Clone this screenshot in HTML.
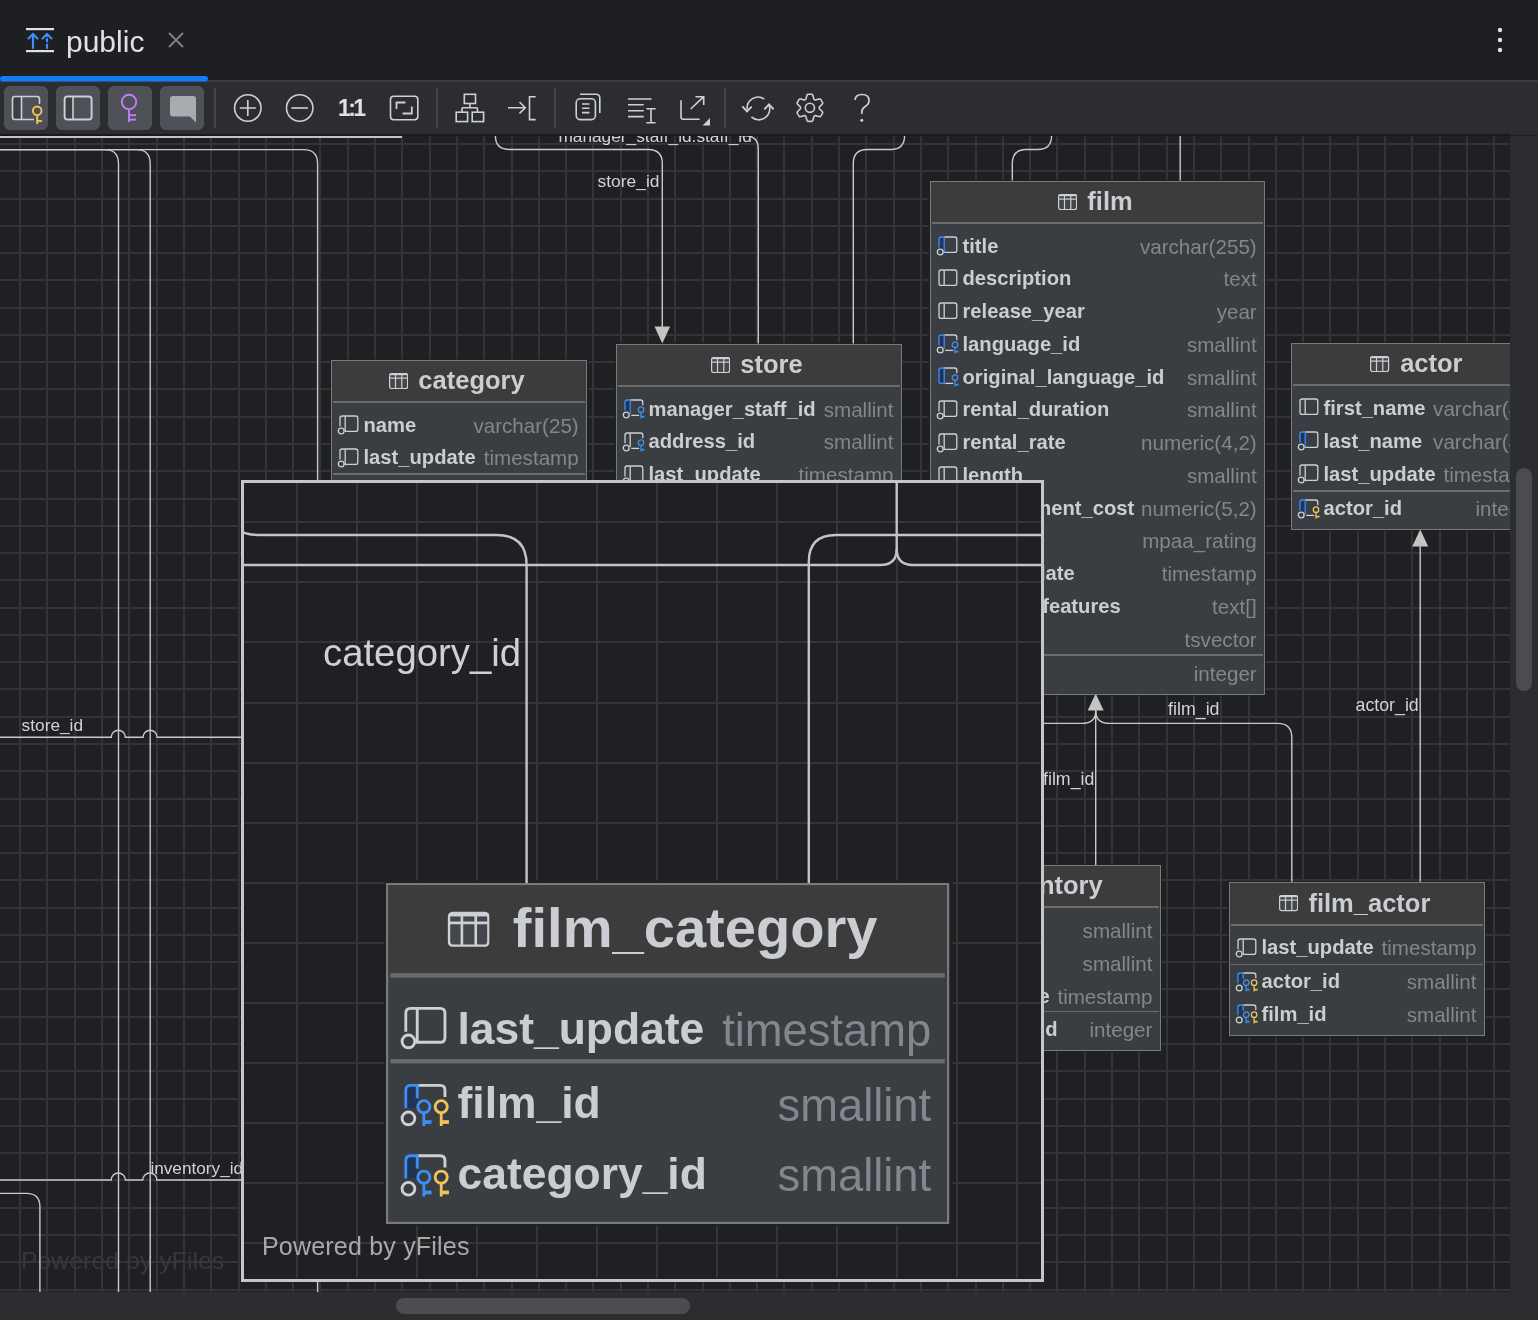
<!DOCTYPE html><html><head><meta charset="utf-8"><style>
*{margin:0;padding:0;box-sizing:border-box}
html,body{width:1538px;height:1320px;overflow:hidden;background:#1e1f22;font-family:"Liberation Sans",sans-serif;-webkit-font-smoothing:antialiased}
.abs,.tb{will-change:transform}
.abs{position:absolute}
.tb{position:absolute;background:#3a3d41;border:1.4px solid #7a7a7a;overflow:hidden}
.hd{position:absolute;left:0;top:0;right:0;background:#3c3c3c}
.tt{position:absolute;text-align:center;font-weight:bold;color:#cacdd2;white-space:nowrap}
.sp{position:absolute;left:1px;right:1px;height:1.4px;background:#6b6b6b}
.ci{position:absolute;overflow:visible}
.nm{position:absolute;font-weight:bold;font-size:20.2px;line-height:25px;color:#cacdd2;white-space:nowrap}
.ty{position:absolute;font-size:20.6px;line-height:25px;color:#83878d;white-space:nowrap}
.lbl{position:absolute;font-size:17px;line-height:20px;color:#d2d3d6;white-space:nowrap}
</style></head><body>

<div class="abs" style="left:0;top:0;width:1538px;height:81px;background:#1e1f22"></div>
<svg class="abs" style="left:0;top:0" width="220" height="82"><rect x="26" y="28" width="28" height="2.2" fill="#dfe1e5"/><rect x="26" y="50" width="28" height="2.2" fill="#dfe1e5"/><g stroke="#3e8ef7" stroke-width="2.2" fill="none" stroke-linecap="round"><path d="M33,48 V34 M28.5,38.5 L33,34 L37.5,38.5"/><path d="M47,34 V36 M47,39 V41.5 M47,44.5 V48 M42.5,38.5 L47,34 L51.5,38.5"/></g><g stroke="#7f8185" stroke-width="1.8"><path d="M169,33 L183,47 M183,33 L169,47"/></g></svg>
<div class="abs" style="left:66px;top:27px;font-size:30px;line-height:30px;color:#dfe1e5">public</div>
<svg class="abs" style="left:1490px;top:24px" width="20" height="36"><g fill="#dfe1e5"><circle cx="10" cy="6" r="2.2"/><circle cx="10" cy="16" r="2.2"/><circle cx="10" cy="26" r="2.2"/></g></svg>
<div class="abs" style="left:0;top:80px;width:1538px;height:1.5px;background:#393b40"></div>
<div class="abs" style="left:0;top:81.5px;width:1538px;height:52.5px;background:#2b2d30"></div>
<div class="abs" style="left:0;top:134px;width:1510px;height:2px;background:#18191b"></div>
<svg class="abs" style="left:0;top:70px" width="220" height="16"><rect x="0" y="6" width="208" height="5.5" rx="2.75" fill="#0f7cf5"/></svg>
<svg class="abs" style="left:0;top:0" width="900" height="134"><rect x="4" y="86" width="44" height="44" rx="6" fill="#4e5157"/><rect x="56" y="86" width="44" height="44" rx="6" fill="#4e5157"/><rect x="108" y="86" width="44" height="44" rx="6" fill="#4e5157"/><rect x="160" y="86" width="44" height="44" rx="6" fill="#4e5157"/><path d="M12.5,96.5 H21.5 V119.5 H12.5 Z" fill="#3c3f44"/><path d="M34,119.5 H15 Q12.5,119.5 12.5,117 V99 Q12.5,96.5 15,96.5 H37 Q39.5,96.5 39.5,99 V104" fill="none" stroke="#ced0d6" stroke-width="1.6"/><line x1="21.5" y1="96.5" x2="21.5" y2="119.5" stroke="#ced0d6" stroke-width="1.6"/><circle cx="37.2" cy="110.8" r="4.3" fill="#4e5157" stroke="#f2c356" stroke-width="1.9"/><line x1="37.2" y1="115" x2="37.2" y2="124" stroke="#f2c356" stroke-width="1.9"/><line x1="37.2" y1="121" x2="42" y2="121" stroke="#f2c356" stroke-width="1.9"/><path d="M64.5,96.5 H73 V119.5 H64.5 Z" fill="#3c3f44"/><rect x="64.6" y="96.5" width="27" height="23" rx="2.8" fill="none" stroke="#ced0d6" stroke-width="1.9"/><line x1="73" y1="96.5" x2="73" y2="119.5" stroke="#ced0d6" stroke-width="1.6"/><circle cx="129" cy="102" r="7.2" fill="none" stroke="#c27ef2" stroke-width="1.9"/><line x1="129" y1="109" x2="129" y2="122" stroke="#c27ef2" stroke-width="1.9"/><line x1="129" y1="115.2" x2="136" y2="115.2" stroke="#c27ef2" stroke-width="1.9"/><line x1="129" y1="119.6" x2="136" y2="119.6" stroke="#c27ef2" stroke-width="1.9"/><path d="M173,96 H193 Q196,96 196,99 V122.5 L190,116.5 H173 Q170,116.5 170,113.5 V99 Q170,96 173,96 Z" fill="#a9acaf"/><rect x="214" y="88" width="2" height="40" fill="#43454a"/><rect x="436" y="88" width="2" height="40" fill="#43454a"/><rect x="554" y="88" width="2" height="40" fill="#43454a"/><rect x="724" y="88" width="2" height="40" fill="#43454a"/><g fill="none" stroke="#ced0d6" stroke-width="1.6"><circle cx="247.8" cy="108" r="13.2"/><path d="M239.8,108 H255.8 M247.8,100 V116"/><circle cx="299.7" cy="108" r="13.2"/><path d="M291.5,108 H308"/><rect x="390.5" y="96.3" width="27.3" height="23.5" rx="3.2"/><path d="M396.5,109 V102.5 H405.5 M411.8,106.5 V113.5 H402.5" stroke-width="1.8"/><rect x="464.3" y="94.3" width="11.2" height="9.2"/><path d="M469.9,103.5 V107.8 M462,107.8 H477.4 M462,107.8 V112 M477.4,107.8 V112"/><rect x="456.2" y="112.2" width="11.4" height="9.4"/><rect x="472.2" y="112.2" width="11.4" height="9.4"/><path d="M508,107.7 H525 M519.5,102 L525.3,107.7 L519.5,113.4"/><path d="M535.7,96.8 H529.5 V119.6 H535.7"/><rect x="576.2" y="98.8" width="19.2" height="20.8" rx="4"/><path d="M580,94.3 H596 Q599.8,94.3 599.8,98 V113"/><path d="M582,104 H589.5 M582,108.3 H589.5 M582,112.6 H589.5"/><path d="M628,99 H651.6 M628,104.7 H643.7 M628,110.7 H643.7 M628,116.6 H643.7"/><path d="M651,108.8 V122.8 M646.4,108.8 H655.6 M646.4,122.8 H655.6"/><path d="M681,100.2 V117 Q681,119.2 683.2,119.2 H699.6"/><path d="M690.7,109 L703.7,96.7 M695.5,96.7 H703.7 V104.9"/><path d="M764.3,99.1 A10.9,10.9 0 0 0 747.2,109.3"/><path d="M751.4,116.9 A10.9,10.9 0 0 0 769,105"/><path d="M742.3,106.4 L747,111.4 L751.7,106.7" stroke-width="1.9"/><path d="M764.3,109.3 L769,104.3 L773.6,109.3" stroke-width="1.9"/><circle cx="809.9" cy="107.8" r="4.6"/></g><path d="M819.30,107.80 L819.30,108.05 L819.29,108.29 L819.30,108.54 L819.53,108.81 L819.82,109.11 L820.16,109.42 L820.52,109.77 L820.92,110.14 L821.32,110.54 L821.72,110.97 L822.10,111.41 L822.46,111.88 L822.72,112.34 L822.60,112.67 L822.46,113.00 L822.32,113.33 L822.18,113.65 L822.02,113.97 L821.85,114.29 L821.68,114.60 L821.50,114.91 L821.31,115.21 L821.11,115.50 L820.90,115.79 L820.69,116.08 L820.47,116.36 L820.24,116.63 L819.72,116.64 L819.13,116.56 L818.55,116.45 L817.98,116.32 L817.44,116.17 L816.92,116.02 L816.43,115.87 L815.99,115.74 L815.59,115.64 L815.24,115.57 L815.02,115.68 L814.81,115.81 L814.60,115.94 L814.39,116.06 L814.17,116.18 L813.96,116.31 L813.84,116.65 L813.73,117.05 L813.62,117.49 L813.51,117.99 L813.38,118.51 L813.23,119.06 L813.07,119.62 L812.87,120.18 L812.65,120.72 L812.38,121.17 L812.03,121.23 L811.68,121.28 L811.32,121.33 L810.97,121.36 L810.61,121.38 L810.26,121.40 L809.90,121.40 L809.54,121.40 L809.19,121.38 L808.83,121.36 L808.48,121.33 L808.12,121.28 L807.77,121.23 L807.42,121.17 L807.15,120.72 L806.93,120.18 L806.73,119.62 L806.57,119.06 L806.42,118.51 L806.29,117.99 L806.18,117.49 L806.07,117.05 L805.96,116.65 L805.84,116.31 L805.63,116.18 L805.41,116.06 L805.20,115.94 L804.99,115.81 L804.78,115.68 L804.56,115.57 L804.21,115.64 L803.81,115.74 L803.37,115.87 L802.88,116.02 L802.36,116.17 L801.82,116.32 L801.25,116.45 L800.67,116.56 L800.08,116.64 L799.56,116.63 L799.33,116.36 L799.11,116.08 L798.90,115.79 L798.69,115.50 L798.49,115.21 L798.30,114.91 L798.12,114.60 L797.95,114.29 L797.78,113.97 L797.62,113.65 L797.48,113.33 L797.34,113.00 L797.20,112.67 L797.08,112.34 L797.34,111.88 L797.70,111.41 L798.08,110.97 L798.48,110.54 L798.88,110.14 L799.28,109.77 L799.64,109.42 L799.98,109.11 L800.27,108.81 L800.50,108.54 L800.51,108.29 L800.50,108.05 L800.50,107.80 L800.50,107.55 L800.51,107.31 L800.50,107.06 L800.27,106.79 L799.98,106.49 L799.64,106.18 L799.28,105.83 L798.88,105.46 L798.48,105.06 L798.08,104.63 L797.70,104.19 L797.34,103.72 L797.08,103.26 L797.20,102.93 L797.34,102.60 L797.48,102.27 L797.62,101.95 L797.78,101.63 L797.95,101.31 L798.12,101.00 L798.30,100.69 L798.49,100.39 L798.69,100.10 L798.90,99.81 L799.11,99.52 L799.33,99.24 L799.56,98.97 L800.08,98.96 L800.67,99.04 L801.25,99.15 L801.82,99.28 L802.36,99.43 L802.88,99.58 L803.37,99.73 L803.81,99.86 L804.21,99.96 L804.56,100.03 L804.78,99.92 L804.99,99.79 L805.20,99.66 L805.41,99.54 L805.63,99.42 L805.84,99.29 L805.96,98.95 L806.07,98.55 L806.18,98.11 L806.29,97.61 L806.42,97.09 L806.57,96.54 L806.73,95.98 L806.93,95.42 L807.15,94.88 L807.42,94.43 L807.77,94.37 L808.12,94.32 L808.48,94.27 L808.83,94.24 L809.19,94.22 L809.54,94.20 L809.90,94.20 L810.26,94.20 L810.61,94.22 L810.97,94.24 L811.32,94.27 L811.68,94.32 L812.03,94.37 L812.38,94.43 L812.65,94.88 L812.87,95.42 L813.07,95.98 L813.23,96.54 L813.38,97.09 L813.51,97.61 L813.62,98.11 L813.73,98.55 L813.84,98.95 L813.96,99.29 L814.17,99.42 L814.39,99.54 L814.60,99.66 L814.81,99.79 L815.02,99.92 L815.24,100.03 L815.59,99.96 L815.99,99.86 L816.43,99.73 L816.92,99.58 L817.44,99.43 L817.98,99.28 L818.55,99.15 L819.13,99.04 L819.72,98.96 L820.24,98.97 L820.47,99.24 L820.69,99.52 L820.90,99.81 L821.11,100.10 L821.31,100.39 L821.50,100.69 L821.68,101.00 L821.85,101.31 L822.02,101.63 L822.18,101.95 L822.32,102.27 L822.46,102.60 L822.60,102.93 L822.72,103.26 L822.46,103.72 L822.10,104.19 L821.72,104.63 L821.32,105.06 L820.92,105.46 L820.52,105.83 L820.16,106.18 L819.82,106.49 L819.53,106.79 L819.30,107.06 L819.29,107.31 L819.30,107.55 Z" fill="none" stroke="#ced0d6" stroke-width="1.6" stroke-linejoin="round"/><path d="M702.6,125.6 L710,118 L710,125.6 Z" fill="#ced0d6"/><path d="M855,100 Q855.5,94.5 862,94.5 Q869,94.5 869,100.5 Q869,104.5 864.5,107 Q861.8,108.8 861.8,112.5 V114" fill="none" stroke="#ced0d6" stroke-width="1.7"/><circle cx="861.8" cy="120.2" r="1.5" fill="#ced0d6"/></svg>
<div class="abs" style="left:337.5px;top:96.83px;font-size:23px;line-height:23px;font-weight:bold;color:#dfe1e5;letter-spacing:-2.6px">1:1</div>
<div class="abs" style="left:0;top:136px;width:1510px;height:1156px;overflow:hidden;background:#1f2023">
<svg class="abs" style="left:0;top:-136px" width="1510" height="1292">
<g fill="#343435"><rect x="19" y="136" width="2" height="1156"/><rect x="46" y="136" width="2" height="1156"/><rect x="74" y="136" width="2" height="1156"/><rect x="101" y="136" width="2" height="1156"/><rect x="128" y="136" width="2" height="1156"/><rect x="156" y="136" width="2" height="1156"/><rect x="183" y="136" width="2" height="1156"/><rect x="210" y="136" width="2" height="1156"/><rect x="238" y="136" width="2" height="1156"/><rect x="265" y="136" width="2" height="1156"/><rect x="292" y="136" width="2" height="1156"/><rect x="319" y="136" width="2" height="1156"/><rect x="347" y="136" width="2" height="1156"/><rect x="374" y="136" width="2" height="1156"/><rect x="401" y="136" width="2" height="1156"/><rect x="429" y="136" width="2" height="1156"/><rect x="456" y="136" width="2" height="1156"/><rect x="483" y="136" width="2" height="1156"/><rect x="511" y="136" width="2" height="1156"/><rect x="538" y="136" width="2" height="1156"/><rect x="565" y="136" width="2" height="1156"/><rect x="592" y="136" width="2" height="1156"/><rect x="620" y="136" width="2" height="1156"/><rect x="647" y="136" width="2" height="1156"/><rect x="674" y="136" width="2" height="1156"/><rect x="702" y="136" width="2" height="1156"/><rect x="729" y="136" width="2" height="1156"/><rect x="756" y="136" width="2" height="1156"/><rect x="783" y="136" width="2" height="1156"/><rect x="811" y="136" width="2" height="1156"/><rect x="838" y="136" width="2" height="1156"/><rect x="865" y="136" width="2" height="1156"/><rect x="893" y="136" width="2" height="1156"/><rect x="920" y="136" width="2" height="1156"/><rect x="947" y="136" width="2" height="1156"/><rect x="975" y="136" width="2" height="1156"/><rect x="1002" y="136" width="2" height="1156"/><rect x="1029" y="136" width="2" height="1156"/><rect x="1056" y="136" width="2" height="1156"/><rect x="1084" y="136" width="2" height="1156"/><rect x="1111" y="136" width="2" height="1156"/><rect x="1138" y="136" width="2" height="1156"/><rect x="1166" y="136" width="2" height="1156"/><rect x="1193" y="136" width="2" height="1156"/><rect x="1220" y="136" width="2" height="1156"/><rect x="1248" y="136" width="2" height="1156"/><rect x="1275" y="136" width="2" height="1156"/><rect x="1302" y="136" width="2" height="1156"/><rect x="1329" y="136" width="2" height="1156"/><rect x="1357" y="136" width="2" height="1156"/><rect x="1384" y="136" width="2" height="1156"/><rect x="1411" y="136" width="2" height="1156"/><rect x="1439" y="136" width="2" height="1156"/><rect x="1466" y="136" width="2" height="1156"/><rect x="1493" y="136" width="2" height="1156"/><rect x="0" y="143" width="1510" height="2"/><rect x="0" y="170" width="1510" height="2"/><rect x="0" y="198" width="1510" height="2"/><rect x="0" y="225" width="1510" height="2"/><rect x="0" y="252" width="1510" height="2"/><rect x="0" y="279" width="1510" height="2"/><rect x="0" y="307" width="1510" height="2"/><rect x="0" y="334" width="1510" height="2"/><rect x="0" y="361" width="1510" height="2"/><rect x="0" y="388" width="1510" height="2"/><rect x="0" y="416" width="1510" height="2"/><rect x="0" y="443" width="1510" height="2"/><rect x="0" y="470" width="1510" height="2"/><rect x="0" y="498" width="1510" height="2"/><rect x="0" y="525" width="1510" height="2"/><rect x="0" y="552" width="1510" height="2"/><rect x="0" y="579" width="1510" height="2"/><rect x="0" y="607" width="1510" height="2"/><rect x="0" y="634" width="1510" height="2"/><rect x="0" y="661" width="1510" height="2"/><rect x="0" y="688" width="1510" height="2"/><rect x="0" y="716" width="1510" height="2"/><rect x="0" y="743" width="1510" height="2"/><rect x="0" y="770" width="1510" height="2"/><rect x="0" y="798" width="1510" height="2"/><rect x="0" y="825" width="1510" height="2"/><rect x="0" y="852" width="1510" height="2"/><rect x="0" y="879" width="1510" height="2"/><rect x="0" y="907" width="1510" height="2"/><rect x="0" y="934" width="1510" height="2"/><rect x="0" y="961" width="1510" height="2"/><rect x="0" y="988" width="1510" height="2"/><rect x="0" y="1016" width="1510" height="2"/><rect x="0" y="1043" width="1510" height="2"/><rect x="0" y="1070" width="1510" height="2"/><rect x="0" y="1098" width="1510" height="2"/><rect x="0" y="1125" width="1510" height="2"/><rect x="0" y="1152" width="1510" height="2"/><rect x="0" y="1179" width="1510" height="2"/><rect x="0" y="1207" width="1510" height="2"/><rect x="0" y="1234" width="1510" height="2"/><rect x="0" y="1261" width="1510" height="2"/><rect x="0" y="1289" width="1510" height="2"/></g>
<text x="21" y="1268.5" font-family="Liberation Sans" font-size="24.5" fill="#37383b" letter-spacing="0.2">Powered by yFiles</text>
<g fill="#1f2023"><rect x="330.4" y="359.2" width="258.1" height="154.75"/><rect x="614.7" y="342.6" width="287.9" height="187.5"/><rect x="928.6" y="179.6" width="337.1" height="515.62"/><rect x="1290.4" y="342.2" width="257.8" height="188.6"/><rect x="903.9" y="864" width="257.8" height="187.6"/><rect x="1227.8" y="880.8" width="257.9" height="156.1"/></g>
<rect x="0" y="136" width="402" height="2" fill="#c4c4c4"/>
<g fill="none" stroke="#c9c9c9" stroke-width="1.4"><path d="M0,149.6 H104.5 Q118.5,149.6 118.5,163.6 V1292"/><path d="M0,149.6 H136.2 Q150.2,149.6 150.2,163.6 V1292"/><path d="M0,149.6 H303.6 Q317.6,149.6 317.6,163.6 V1292"/><path d="M0,737.2 H111.3 A7,7 0 0 1 125.3,737.2 H143.1 A7,7 0 0 1 157.1,737.2 H260"/><path d="M0,1180 H111.3 A7,7 0 0 1 125.3,1180 H142.8 A7,7 0 0 1 156.8,1180 H260"/><path d="M0,1193.4 H26.5 Q39.9,1193.4 39.9,1206.8 V1292"/><path d="M495.4,130 V136 Q495.4,149.5 509.7,149.5 H648.2 Q662.3,149.5 662.3,163.6 V328"/><path d="M740,135.8 H745 Q758.3,135.8 758.3,149 V343.5"/><path d="M853.3,343.5 V163.6 Q853.3,149.5 867.3,149.5 H890.6 Q904.6,149.5 904.6,135.5 V130"/><path d="M1012.3,180.5 V163.6 Q1012.3,149.5 1026.3,149.5 H1037.6 Q1051.6,149.5 1051.6,135.5 V130"/><path d="M1180.2,130 V180.5"/><path d="M1420.2,545 V881.7"/><path d="M1095.7,708 V865"/><path d="M1030,723.4 H1082 Q1095.7,723.4 1095.7,711"/><path d="M1095.7,711 Q1095.7,723.4 1109.4,723.4 H1277.6 Q1291.8,723.4 1291.8,737.6 V881.7"/></g>
<g fill="#c4c4c4"><path d="M662.3,343.5 L654.5,326.5 L670.1,326.5 Z"/><path d="M1420.2,529.5 L1412.2,546.5 L1428.2,546.5 Z"/><path d="M1095.7,693.5 L1087.7,710.5 L1103.7,710.5 Z"/></g>
</svg>
</div>
<div class="abs" style="left:0;top:136px;width:1510px;height:1156px;overflow:hidden">
<div class="lbl" style="left:558.4px;top:-8.14px;font-size:17.3px;line-height:17.3px;color:#d2d3d6;">manager_staff_id:staff_id</div>
<div class="lbl" style="left:597.6px;top:37.07px;font-size:17.4px;line-height:17.4px;color:#d2d3d6;">store_id</div>
<div class="lbl" style="left:21.6px;top:581.36px;font-size:17.3px;line-height:17.3px;color:#d2d3d6;">store_id</div>
<div class="lbl" style="left:150.4px;top:1023.94px;font-size:17.2px;line-height:17.2px;color:#d2d3d6;">inventory_id</div>
<div class="lbl" style="left:1168.1px;top:565.23px;font-size:17.8px;line-height:17.8px;color:#d2d3d6;">film_id</div>
<div class="lbl" style="left:1043px;top:634.93px;font-size:17.8px;line-height:17.8px;color:#d2d3d6;">film_id</div>
<div class="lbl" style="left:1355.5px;top:561.43px;font-size:17.8px;line-height:17.8px;color:#d2d3d6;">actor_id</div>
<div class="tb" style="left:331.3px;top:224.1px;width:256.3px;height:152.95px">
<div class="hd" style="height:41px"></div>
<div class="tt" style="top:7.15px;left:0;width:256.3px;font-size:25.5px;line-height:25.5px"><svg width="19.2" height="16.2" viewBox="0 0 19.2 16.2" style="vertical-align:0px;margin-right:10.5px;margin-left:-7px"><rect x="0.6" y="0.6" width="18" height="15" rx="2" fill="#43464b" stroke="#ced0d6" stroke-width="1.2"/><rect x="0.6" y="0.6" width="18" height="1.6" fill="#ced0d6"/><line x1="0.6" y1="5.1" x2="18.6" y2="5.1" stroke="#ced0d6" stroke-width="1.2"/><line x1="6.5" y1="0.6" x2="6.5" y2="15.6" stroke="#ced0d6" stroke-width="1.2"/><line x1="12.8" y1="0.6" x2="12.8" y2="15.6" stroke="#ced0d6" stroke-width="1.2"/></svg>category</div>
<div class="sp" style="top:40.3px"></div>
<div class="sp" style="top:112.45px"></div>
<svg class="ci" style="left:5.8px;top:52.2px" width="24" height="24" viewBox="-2 -3 24 24"><rect x="0" y="0" width="5.2" height="15.4" fill="#3d4045"/><path d="M5.2,0 H15.600000000000001 Q17.8,0 17.8,2.2 V13.2 Q17.8,15.4 15.600000000000001,15.4 H4.6" fill="none" stroke="#ced0d6" stroke-width="1.3"/><path d="M5.2,0 H2.2 Q0,0 0,2.2 V10.600000000000001 M5.2,0 V15.4" fill="none" stroke="#ced0d6" stroke-width="1.3"/><circle cx="1.2" cy="15" r="2.9" fill="#3a3d41" stroke="#ced0d6" stroke-width="1.3"/></svg>
<div class="nm" style="left:31.5px;top:51.5px">name</div>
<div class="ty" style="right:7.6px;top:51.5px">varchar(25)</div>
<svg class="ci" style="left:5.8px;top:84.95px" width="24" height="24" viewBox="-2 -3 24 24"><rect x="0" y="0" width="5.2" height="15.4" fill="#3d4045"/><path d="M5.2,0 H15.600000000000001 Q17.8,0 17.8,2.2 V13.2 Q17.8,15.4 15.600000000000001,15.4 H4.6" fill="none" stroke="#ced0d6" stroke-width="1.3"/><path d="M5.2,0 H2.2 Q0,0 0,2.2 V10.600000000000001 M5.2,0 V15.4" fill="none" stroke="#ced0d6" stroke-width="1.3"/><circle cx="1.2" cy="15" r="2.9" fill="#3a3d41" stroke="#ced0d6" stroke-width="1.3"/></svg>
<div class="nm" style="left:31.5px;top:84.25px">last_update</div>
<div class="ty" style="right:7.6px;top:84.25px">timestamp</div>
<svg class="ci" style="left:5.8px;top:118.95px" width="24" height="24" viewBox="-2 -3 24 24"><path d="M5.2,0 H15.600000000000001 Q17.8,0 17.8,2.2 V5.3" fill="none" stroke="#ced0d6" stroke-width="1.3"/><rect x="0" y="0" width="5.2" height="13.8" fill="#213456"/><path d="M5.2,13.9 V0 H2.2 Q0,0 0,2.2 V10.2" fill="none" stroke="#3d8ef5" stroke-width="1.3"/><path d="M6.2,15.4 H14.2" fill="none" stroke="#ced0d6" stroke-width="1.3"/><circle cx="16.0" cy="9.7" r="2.75" fill="#3a3d41" stroke="#f2c356" stroke-width="1.3"/><line x1="16.0" y1="12.45" x2="16.0" y2="18.5" stroke="#f2c356" stroke-width="1.3"/><rect x="16.0" y="15.8" width="3.5" height="1.7" fill="#f2c356"/><circle cx="1.2" cy="15" r="2.9" fill="#3a3d41" stroke="#ced0d6" stroke-width="1.3"/></svg>
<div class="nm" style="left:31.5px;top:118.25px">category_id</div>
<div class="ty" style="right:7.6px;top:118.25px">integer</div>
</div>
<div class="tb" style="left:615.6px;top:207.5px;width:286.1px;height:185.7px">
<div class="hd" style="height:41px"></div>
<div class="tt" style="top:7.15px;left:0;width:286.1px;font-size:25.5px;line-height:25.5px"><svg width="19.2" height="16.2" viewBox="0 0 19.2 16.2" style="vertical-align:0px;margin-right:10.5px;margin-left:-7px"><rect x="0.6" y="0.6" width="18" height="15" rx="2" fill="#43464b" stroke="#ced0d6" stroke-width="1.2"/><rect x="0.6" y="0.6" width="18" height="1.6" fill="#ced0d6"/><line x1="0.6" y1="5.1" x2="18.6" y2="5.1" stroke="#ced0d6" stroke-width="1.2"/><line x1="6.5" y1="0.6" x2="6.5" y2="15.6" stroke="#ced0d6" stroke-width="1.2"/><line x1="12.8" y1="0.6" x2="12.8" y2="15.6" stroke="#ced0d6" stroke-width="1.2"/></svg>store</div>
<div class="sp" style="top:40.3px"></div>
<div class="sp" style="top:145.2px"></div>
<svg class="ci" style="left:5.8px;top:52.2px" width="24" height="24" viewBox="-2 -3 24 24"><path d="M5.2,0 H15.600000000000001 Q17.8,0 17.8,2.2 V5.3" fill="none" stroke="#ced0d6" stroke-width="1.3"/><rect x="0" y="0" width="5.2" height="13.8" fill="#213456"/><path d="M5.2,13.9 V0 H2.2 Q0,0 0,2.2 V10.2" fill="none" stroke="#3d8ef5" stroke-width="1.3"/><path d="M6.2,15.4 H14.2" fill="none" stroke="#ced0d6" stroke-width="1.3"/><circle cx="16.0" cy="9.7" r="2.75" fill="#3a3d41" stroke="#3d8ef5" stroke-width="1.3"/><line x1="16.0" y1="12.45" x2="16.0" y2="18.5" stroke="#3d8ef5" stroke-width="1.3"/><rect x="16.0" y="15.8" width="3.5" height="1.7" fill="#3d8ef5"/><circle cx="1.2" cy="15" r="2.9" fill="#3a3d41" stroke="#ced0d6" stroke-width="1.3"/></svg>
<div class="nm" style="left:31.5px;top:51.5px">manager_staff_id</div>
<div class="ty" style="right:7.6px;top:51.5px">smallint</div>
<svg class="ci" style="left:5.8px;top:84.95px" width="24" height="24" viewBox="-2 -3 24 24"><path d="M5.2,0 H15.600000000000001 Q17.8,0 17.8,2.2 V5.3" fill="none" stroke="#ced0d6" stroke-width="1.3"/><rect x="0" y="0" width="5.2" height="13.8" fill="#3d4045"/><path d="M5.2,13.9 V0 H2.2 Q0,0 0,2.2 V10.2" fill="none" stroke="#ced0d6" stroke-width="1.3"/><path d="M6.2,15.4 H14.2" fill="none" stroke="#ced0d6" stroke-width="1.3"/><circle cx="16.0" cy="9.7" r="2.75" fill="#3a3d41" stroke="#3d8ef5" stroke-width="1.3"/><line x1="16.0" y1="12.45" x2="16.0" y2="18.5" stroke="#3d8ef5" stroke-width="1.3"/><rect x="16.0" y="15.8" width="3.5" height="1.7" fill="#3d8ef5"/><circle cx="1.2" cy="15" r="2.9" fill="#3a3d41" stroke="#ced0d6" stroke-width="1.3"/></svg>
<div class="nm" style="left:31.5px;top:84.25px">address_id</div>
<div class="ty" style="right:7.6px;top:84.25px">smallint</div>
<svg class="ci" style="left:5.8px;top:117.7px" width="24" height="24" viewBox="-2 -3 24 24"><rect x="0" y="0" width="5.2" height="15.4" fill="#3d4045"/><path d="M5.2,0 H15.600000000000001 Q17.8,0 17.8,2.2 V13.2 Q17.8,15.4 15.600000000000001,15.4 H4.6" fill="none" stroke="#ced0d6" stroke-width="1.3"/><path d="M5.2,0 H2.2 Q0,0 0,2.2 V10.600000000000001 M5.2,0 V15.4" fill="none" stroke="#ced0d6" stroke-width="1.3"/><circle cx="1.2" cy="15" r="2.9" fill="#3a3d41" stroke="#ced0d6" stroke-width="1.3"/></svg>
<div class="nm" style="left:31.5px;top:117px">last_update</div>
<div class="ty" style="right:7.6px;top:117px">timestamp</div>
<svg class="ci" style="left:5.8px;top:151.7px" width="24" height="24" viewBox="-2 -3 24 24"><path d="M5.2,0 H15.600000000000001 Q17.8,0 17.8,2.2 V5.3" fill="none" stroke="#ced0d6" stroke-width="1.3"/><rect x="0" y="0" width="5.2" height="13.8" fill="#213456"/><path d="M5.2,13.9 V0 H2.2 Q0,0 0,2.2 V10.2" fill="none" stroke="#3d8ef5" stroke-width="1.3"/><path d="M6.2,15.4 H14.2" fill="none" stroke="#ced0d6" stroke-width="1.3"/><circle cx="16.0" cy="9.7" r="2.75" fill="#3a3d41" stroke="#f2c356" stroke-width="1.3"/><line x1="16.0" y1="12.45" x2="16.0" y2="18.5" stroke="#f2c356" stroke-width="1.3"/><rect x="16.0" y="15.8" width="3.5" height="1.7" fill="#f2c356"/><circle cx="1.2" cy="15" r="2.9" fill="#3a3d41" stroke="#ced0d6" stroke-width="1.3"/></svg>
<div class="nm" style="left:31.5px;top:151px">store_id</div>
<div class="ty" style="right:7.6px;top:151px">integer</div>
</div>
<div class="tb" style="left:929.5px;top:44.5px;width:335.3px;height:513.82px">
<div class="hd" style="height:41px"></div>
<div class="tt" style="top:7.15px;left:0;width:335.3px;font-size:25.5px;line-height:25.5px"><svg width="19.2" height="16.2" viewBox="0 0 19.2 16.2" style="vertical-align:0px;margin-right:10.5px;margin-left:-7px"><rect x="0.6" y="0.6" width="18" height="15" rx="2" fill="#43464b" stroke="#ced0d6" stroke-width="1.2"/><rect x="0.6" y="0.6" width="18" height="1.6" fill="#ced0d6"/><line x1="0.6" y1="5.1" x2="18.6" y2="5.1" stroke="#ced0d6" stroke-width="1.2"/><line x1="6.5" y1="0.6" x2="6.5" y2="15.6" stroke="#ced0d6" stroke-width="1.2"/><line x1="12.8" y1="0.6" x2="12.8" y2="15.6" stroke="#ced0d6" stroke-width="1.2"/></svg>film</div>
<div class="sp" style="top:40.3px"></div>
<div class="sp" style="top:472.12px"></div>
<svg class="ci" style="left:5.8px;top:52.2px" width="24" height="24" viewBox="-2 -3 24 24"><rect x="0" y="0" width="5.2" height="15.4" fill="#213456"/><path d="M5.2,0 H15.600000000000001 Q17.8,0 17.8,2.2 V13.2 Q17.8,15.4 15.600000000000001,15.4 H4.6" fill="none" stroke="#ced0d6" stroke-width="1.3"/><path d="M5.2,0 H2.2 Q0,0 0,2.2 V10.600000000000001 M5.2,0 V15.4" fill="none" stroke="#3d8ef5" stroke-width="1.3"/><circle cx="1.2" cy="15" r="2.9" fill="#3a3d41" stroke="#ced0d6" stroke-width="1.3"/></svg>
<div class="nm" style="left:31.5px;top:51.5px">title</div>
<div class="ty" style="right:7.6px;top:51.5px">varchar(255)</div>
<svg class="ci" style="left:5.8px;top:84.96px" width="24" height="24" viewBox="-2 -3 24 24"><rect x="0" y="0" width="5.2" height="15.4" fill="#3d4045"/><path d="M5.2,0 H15.600000000000001 Q17.8,0 17.8,2.2 V13.2 Q17.8,15.4 15.600000000000001,15.4 H5.2" fill="none" stroke="#ced0d6" stroke-width="1.3"/><path d="M5.2,0 H2.2 Q0,0 0,2.2 V13.2 Q0,15.4 2.2,15.4 H5.2 M5.2,0 V15.4" fill="none" stroke="#ced0d6" stroke-width="1.3"/></svg>
<div class="nm" style="left:31.5px;top:84.26px">description</div>
<div class="ty" style="right:7.6px;top:84.26px">text</div>
<svg class="ci" style="left:5.8px;top:117.72px" width="24" height="24" viewBox="-2 -3 24 24"><rect x="0" y="0" width="5.2" height="15.4" fill="#3d4045"/><path d="M5.2,0 H15.600000000000001 Q17.8,0 17.8,2.2 V13.2 Q17.8,15.4 15.600000000000001,15.4 H5.2" fill="none" stroke="#ced0d6" stroke-width="1.3"/><path d="M5.2,0 H2.2 Q0,0 0,2.2 V13.2 Q0,15.4 2.2,15.4 H5.2 M5.2,0 V15.4" fill="none" stroke="#ced0d6" stroke-width="1.3"/></svg>
<div class="nm" style="left:31.5px;top:117.02px">release_year</div>
<div class="ty" style="right:7.6px;top:117.02px">year</div>
<svg class="ci" style="left:5.8px;top:150.48px" width="24" height="24" viewBox="-2 -3 24 24"><path d="M5.2,0 H15.600000000000001 Q17.8,0 17.8,2.2 V5.3" fill="none" stroke="#ced0d6" stroke-width="1.3"/><rect x="0" y="0" width="5.2" height="13.8" fill="#213456"/><path d="M5.2,13.9 V0 H2.2 Q0,0 0,2.2 V10.2" fill="none" stroke="#3d8ef5" stroke-width="1.3"/><path d="M6.2,15.4 H14.2" fill="none" stroke="#ced0d6" stroke-width="1.3"/><circle cx="16.0" cy="9.7" r="2.75" fill="#3a3d41" stroke="#3d8ef5" stroke-width="1.3"/><line x1="16.0" y1="12.45" x2="16.0" y2="18.5" stroke="#3d8ef5" stroke-width="1.3"/><rect x="16.0" y="15.8" width="3.5" height="1.7" fill="#3d8ef5"/><circle cx="1.2" cy="15" r="2.9" fill="#3a3d41" stroke="#ced0d6" stroke-width="1.3"/></svg>
<div class="nm" style="left:31.5px;top:149.78px">language_id</div>
<div class="ty" style="right:7.6px;top:149.78px">smallint</div>
<svg class="ci" style="left:5.8px;top:183.24px" width="24" height="24" viewBox="-2 -3 24 24"><path d="M5.2,0 H15.600000000000001 Q17.8,0 17.8,2.2 V5.3" fill="none" stroke="#ced0d6" stroke-width="1.3"/><rect x="0" y="0" width="5.2" height="15.4" fill="#213456"/><path d="M5.2,0 H2.2 Q0,0 0,2.2 V13.2 Q0,15.4 2.2,15.4 H5.2 V0" fill="none" stroke="#3d8ef5" stroke-width="1.3"/><path d="M6.2,15.4 H14.2" fill="none" stroke="#ced0d6" stroke-width="1.3"/><circle cx="16.0" cy="9.7" r="2.75" fill="#3a3d41" stroke="#3d8ef5" stroke-width="1.3"/><line x1="16.0" y1="12.45" x2="16.0" y2="18.5" stroke="#3d8ef5" stroke-width="1.3"/><rect x="16.0" y="15.8" width="3.5" height="1.7" fill="#3d8ef5"/></svg>
<div class="nm" style="left:31.5px;top:182.54px">original_language_id</div>
<div class="ty" style="right:7.6px;top:182.54px">smallint</div>
<svg class="ci" style="left:5.8px;top:216px" width="24" height="24" viewBox="-2 -3 24 24"><rect x="0" y="0" width="5.2" height="15.4" fill="#3d4045"/><path d="M5.2,0 H15.600000000000001 Q17.8,0 17.8,2.2 V13.2 Q17.8,15.4 15.600000000000001,15.4 H4.6" fill="none" stroke="#ced0d6" stroke-width="1.3"/><path d="M5.2,0 H2.2 Q0,0 0,2.2 V10.600000000000001 M5.2,0 V15.4" fill="none" stroke="#ced0d6" stroke-width="1.3"/><circle cx="1.2" cy="15" r="2.9" fill="#3a3d41" stroke="#ced0d6" stroke-width="1.3"/></svg>
<div class="nm" style="left:31.5px;top:215.3px">rental_duration</div>
<div class="ty" style="right:7.6px;top:215.3px">smallint</div>
<svg class="ci" style="left:5.8px;top:248.76px" width="24" height="24" viewBox="-2 -3 24 24"><rect x="0" y="0" width="5.2" height="15.4" fill="#3d4045"/><path d="M5.2,0 H15.600000000000001 Q17.8,0 17.8,2.2 V13.2 Q17.8,15.4 15.600000000000001,15.4 H4.6" fill="none" stroke="#ced0d6" stroke-width="1.3"/><path d="M5.2,0 H2.2 Q0,0 0,2.2 V10.600000000000001 M5.2,0 V15.4" fill="none" stroke="#ced0d6" stroke-width="1.3"/><circle cx="1.2" cy="15" r="2.9" fill="#3a3d41" stroke="#ced0d6" stroke-width="1.3"/></svg>
<div class="nm" style="left:31.5px;top:248.06px">rental_rate</div>
<div class="ty" style="right:7.6px;top:248.06px">numeric(4,2)</div>
<svg class="ci" style="left:5.8px;top:281.52px" width="24" height="24" viewBox="-2 -3 24 24"><rect x="0" y="0" width="5.2" height="15.4" fill="#3d4045"/><path d="M5.2,0 H15.600000000000001 Q17.8,0 17.8,2.2 V13.2 Q17.8,15.4 15.600000000000001,15.4 H5.2" fill="none" stroke="#ced0d6" stroke-width="1.3"/><path d="M5.2,0 H2.2 Q0,0 0,2.2 V13.2 Q0,15.4 2.2,15.4 H5.2 M5.2,0 V15.4" fill="none" stroke="#ced0d6" stroke-width="1.3"/></svg>
<div class="nm" style="left:31.5px;top:280.82px">length</div>
<div class="ty" style="right:7.6px;top:280.82px">smallint</div>
<svg class="ci" style="left:5.8px;top:314.28px" width="24" height="24" viewBox="-2 -3 24 24"><rect x="0" y="0" width="5.2" height="15.4" fill="#3d4045"/><path d="M5.2,0 H15.600000000000001 Q17.8,0 17.8,2.2 V13.2 Q17.8,15.4 15.600000000000001,15.4 H4.6" fill="none" stroke="#ced0d6" stroke-width="1.3"/><path d="M5.2,0 H2.2 Q0,0 0,2.2 V10.600000000000001 M5.2,0 V15.4" fill="none" stroke="#ced0d6" stroke-width="1.3"/><circle cx="1.2" cy="15" r="2.9" fill="#3a3d41" stroke="#ced0d6" stroke-width="1.3"/></svg>
<div class="nm" style="left:31.5px;top:313.58px">replacement_cost</div>
<div class="ty" style="right:7.6px;top:313.58px">numeric(5,2)</div>
<svg class="ci" style="left:5.8px;top:347.04px" width="24" height="24" viewBox="-2 -3 24 24"><rect x="0" y="0" width="5.2" height="15.4" fill="#3d4045"/><path d="M5.2,0 H15.600000000000001 Q17.8,0 17.8,2.2 V13.2 Q17.8,15.4 15.600000000000001,15.4 H5.2" fill="none" stroke="#ced0d6" stroke-width="1.3"/><path d="M5.2,0 H2.2 Q0,0 0,2.2 V13.2 Q0,15.4 2.2,15.4 H5.2 M5.2,0 V15.4" fill="none" stroke="#ced0d6" stroke-width="1.3"/></svg>
<div class="nm" style="left:31.5px;top:346.34px">rating</div>
<div class="ty" style="right:7.6px;top:346.34px">mpaa_rating</div>
<svg class="ci" style="left:5.8px;top:379.8px" width="24" height="24" viewBox="-2 -3 24 24"><rect x="0" y="0" width="5.2" height="15.4" fill="#3d4045"/><path d="M5.2,0 H15.600000000000001 Q17.8,0 17.8,2.2 V13.2 Q17.8,15.4 15.600000000000001,15.4 H4.6" fill="none" stroke="#ced0d6" stroke-width="1.3"/><path d="M5.2,0 H2.2 Q0,0 0,2.2 V10.600000000000001 M5.2,0 V15.4" fill="none" stroke="#ced0d6" stroke-width="1.3"/><circle cx="1.2" cy="15" r="2.9" fill="#3a3d41" stroke="#ced0d6" stroke-width="1.3"/></svg>
<div class="nm" style="left:31.5px;top:379.1px">last_update</div>
<div class="ty" style="right:7.6px;top:379.1px">timestamp</div>
<svg class="ci" style="left:5.8px;top:412.56px" width="24" height="24" viewBox="-2 -3 24 24"><rect x="0" y="0" width="5.2" height="15.4" fill="#3d4045"/><path d="M5.2,0 H15.600000000000001 Q17.8,0 17.8,2.2 V13.2 Q17.8,15.4 15.600000000000001,15.4 H5.2" fill="none" stroke="#ced0d6" stroke-width="1.3"/><path d="M5.2,0 H2.2 Q0,0 0,2.2 V13.2 Q0,15.4 2.2,15.4 H5.2 M5.2,0 V15.4" fill="none" stroke="#ced0d6" stroke-width="1.3"/></svg>
<div class="nm" style="left:31.5px;top:411.86px">special_features</div>
<div class="ty" style="right:7.6px;top:411.86px">text[]</div>
<svg class="ci" style="left:5.8px;top:445.32px" width="24" height="24" viewBox="-2 -3 24 24"><rect x="0" y="0" width="5.2" height="15.4" fill="#3d4045"/><path d="M5.2,0 H15.600000000000001 Q17.8,0 17.8,2.2 V13.2 Q17.8,15.4 15.600000000000001,15.4 H4.6" fill="none" stroke="#ced0d6" stroke-width="1.3"/><path d="M5.2,0 H2.2 Q0,0 0,2.2 V10.600000000000001 M5.2,0 V15.4" fill="none" stroke="#ced0d6" stroke-width="1.3"/><circle cx="1.2" cy="15" r="2.9" fill="#3a3d41" stroke="#ced0d6" stroke-width="1.3"/></svg>
<div class="nm" style="left:31.5px;top:444.62px">fulltext</div>
<div class="ty" style="right:7.6px;top:444.62px">tsvector</div>
<svg class="ci" style="left:5.8px;top:479.22px" width="24" height="24" viewBox="-2 -3 24 24"><path d="M5.2,0 H15.600000000000001 Q17.8,0 17.8,2.2 V5.3" fill="none" stroke="#ced0d6" stroke-width="1.3"/><rect x="0" y="0" width="5.2" height="13.8" fill="#213456"/><path d="M5.2,13.9 V0 H2.2 Q0,0 0,2.2 V10.2" fill="none" stroke="#3d8ef5" stroke-width="1.3"/><path d="M6.2,15.4 H14.2" fill="none" stroke="#ced0d6" stroke-width="1.3"/><circle cx="16.0" cy="9.7" r="2.75" fill="#3a3d41" stroke="#f2c356" stroke-width="1.3"/><line x1="16.0" y1="12.45" x2="16.0" y2="18.5" stroke="#f2c356" stroke-width="1.3"/><rect x="16.0" y="15.8" width="3.5" height="1.7" fill="#f2c356"/><circle cx="1.2" cy="15" r="2.9" fill="#3a3d41" stroke="#ced0d6" stroke-width="1.3"/></svg>
<div class="nm" style="left:31.5px;top:478.52px">film_id</div>
<div class="ty" style="right:7.6px;top:478.52px">integer</div>
</div>
<div class="tb" style="left:1291.3px;top:207.1px;width:256px;height:186.8px">
<div class="hd" style="height:41px"></div>
<div class="tt" style="top:7.15px;left:0;width:256px;font-size:25.5px;line-height:25.5px"><svg width="19.2" height="16.2" viewBox="0 0 19.2 16.2" style="vertical-align:0px;margin-right:10.5px;margin-left:-7px"><rect x="0.6" y="0.6" width="18" height="15" rx="2" fill="#43464b" stroke="#ced0d6" stroke-width="1.2"/><rect x="0.6" y="0.6" width="18" height="1.6" fill="#ced0d6"/><line x1="0.6" y1="5.1" x2="18.6" y2="5.1" stroke="#ced0d6" stroke-width="1.2"/><line x1="6.5" y1="0.6" x2="6.5" y2="15.6" stroke="#ced0d6" stroke-width="1.2"/><line x1="12.8" y1="0.6" x2="12.8" y2="15.6" stroke="#ced0d6" stroke-width="1.2"/></svg>actor</div>
<div class="sp" style="top:40.3px"></div>
<div class="sp" style="top:146.4px"></div>
<svg class="ci" style="left:5.8px;top:52.2px" width="24" height="24" viewBox="-2 -3 24 24"><rect x="0" y="0" width="5.2" height="15.4" fill="#3d4045"/><path d="M5.2,0 H15.600000000000001 Q17.8,0 17.8,2.2 V13.2 Q17.8,15.4 15.600000000000001,15.4 H5.2" fill="none" stroke="#ced0d6" stroke-width="1.3"/><path d="M5.2,0 H2.2 Q0,0 0,2.2 V13.2 Q0,15.4 2.2,15.4 H5.2 M5.2,0 V15.4" fill="none" stroke="#ced0d6" stroke-width="1.3"/></svg>
<div class="nm" style="left:31.5px;top:51.5px">first_name</div>
<div class="ty" style="right:7.6px;top:51.5px">varchar(45)</div>
<svg class="ci" style="left:5.8px;top:85.3px" width="24" height="24" viewBox="-2 -3 24 24"><rect x="0" y="0" width="5.2" height="15.4" fill="#213456"/><path d="M5.2,0 H15.600000000000001 Q17.8,0 17.8,2.2 V13.2 Q17.8,15.4 15.600000000000001,15.4 H4.6" fill="none" stroke="#ced0d6" stroke-width="1.3"/><path d="M5.2,0 H2.2 Q0,0 0,2.2 V10.600000000000001 M5.2,0 V15.4" fill="none" stroke="#3d8ef5" stroke-width="1.3"/><circle cx="1.2" cy="15" r="2.9" fill="#3a3d41" stroke="#ced0d6" stroke-width="1.3"/></svg>
<div class="nm" style="left:31.5px;top:84.6px">last_name</div>
<div class="ty" style="right:7.6px;top:84.6px">varchar(45)</div>
<svg class="ci" style="left:5.8px;top:118.4px" width="24" height="24" viewBox="-2 -3 24 24"><rect x="0" y="0" width="5.2" height="15.4" fill="#3d4045"/><path d="M5.2,0 H15.600000000000001 Q17.8,0 17.8,2.2 V13.2 Q17.8,15.4 15.600000000000001,15.4 H4.6" fill="none" stroke="#ced0d6" stroke-width="1.3"/><path d="M5.2,0 H2.2 Q0,0 0,2.2 V10.600000000000001 M5.2,0 V15.4" fill="none" stroke="#ced0d6" stroke-width="1.3"/><circle cx="1.2" cy="15" r="2.9" fill="#3a3d41" stroke="#ced0d6" stroke-width="1.3"/></svg>
<div class="nm" style="left:31.5px;top:117.7px">last_update</div>
<div class="ty" style="right:7.6px;top:117.7px">timestamp</div>
<svg class="ci" style="left:5.8px;top:152.7px" width="24" height="24" viewBox="-2 -3 24 24"><path d="M5.2,0 H15.600000000000001 Q17.8,0 17.8,2.2 V5.3" fill="none" stroke="#ced0d6" stroke-width="1.3"/><rect x="0" y="0" width="5.2" height="13.8" fill="#213456"/><path d="M5.2,13.9 V0 H2.2 Q0,0 0,2.2 V10.2" fill="none" stroke="#3d8ef5" stroke-width="1.3"/><path d="M6.2,15.4 H14.2" fill="none" stroke="#ced0d6" stroke-width="1.3"/><circle cx="16.0" cy="9.7" r="2.75" fill="#3a3d41" stroke="#f2c356" stroke-width="1.3"/><line x1="16.0" y1="12.45" x2="16.0" y2="18.5" stroke="#f2c356" stroke-width="1.3"/><rect x="16.0" y="15.8" width="3.5" height="1.7" fill="#f2c356"/><circle cx="1.2" cy="15" r="2.9" fill="#3a3d41" stroke="#ced0d6" stroke-width="1.3"/></svg>
<div class="nm" style="left:31.5px;top:152px">actor_id</div>
<div class="ty" style="right:7.6px;top:152px">integer</div>
</div>
<div class="tb" style="left:904.8px;top:728.9px;width:256px;height:185.8px">
<div class="hd" style="height:41px"></div>
<div class="tt" style="top:7.15px;left:0;width:256px;font-size:25.5px;line-height:25.5px"><svg width="19.2" height="16.2" viewBox="0 0 19.2 16.2" style="vertical-align:0px;margin-right:10.5px;margin-left:-7px"><rect x="0.6" y="0.6" width="18" height="15" rx="2" fill="#43464b" stroke="#ced0d6" stroke-width="1.2"/><rect x="0.6" y="0.6" width="18" height="1.6" fill="#ced0d6"/><line x1="0.6" y1="5.1" x2="18.6" y2="5.1" stroke="#ced0d6" stroke-width="1.2"/><line x1="6.5" y1="0.6" x2="6.5" y2="15.6" stroke="#ced0d6" stroke-width="1.2"/><line x1="12.8" y1="0.6" x2="12.8" y2="15.6" stroke="#ced0d6" stroke-width="1.2"/></svg>inventory</div>
<div class="sp" style="top:40.3px"></div>
<div class="sp" style="top:144.8px"></div>
<svg class="ci" style="left:5.8px;top:52.2px" width="24" height="24" viewBox="-2 -3 24 24"><path d="M5.2,0 H15.600000000000001 Q17.8,0 17.8,2.2 V5.3" fill="none" stroke="#ced0d6" stroke-width="1.3"/><rect x="0" y="0" width="5.2" height="13.8" fill="#213456"/><path d="M5.2,13.9 V0 H2.2 Q0,0 0,2.2 V10.2" fill="none" stroke="#3d8ef5" stroke-width="1.3"/><path d="M6.2,15.4 H14.2" fill="none" stroke="#ced0d6" stroke-width="1.3"/><circle cx="16.0" cy="9.7" r="2.75" fill="#3a3d41" stroke="#3d8ef5" stroke-width="1.3"/><line x1="16.0" y1="12.45" x2="16.0" y2="18.5" stroke="#3d8ef5" stroke-width="1.3"/><rect x="16.0" y="15.8" width="3.5" height="1.7" fill="#3d8ef5"/><circle cx="1.2" cy="15" r="2.9" fill="#3a3d41" stroke="#ced0d6" stroke-width="1.3"/></svg>
<div class="nm" style="left:31.5px;top:51.5px">film_id</div>
<div class="ty" style="right:7.6px;top:51.5px">smallint</div>
<svg class="ci" style="left:5.8px;top:85.3px" width="24" height="24" viewBox="-2 -3 24 24"><path d="M5.2,0 H15.600000000000001 Q17.8,0 17.8,2.2 V5.3" fill="none" stroke="#ced0d6" stroke-width="1.3"/><rect x="0" y="0" width="5.2" height="13.8" fill="#213456"/><path d="M5.2,13.9 V0 H2.2 Q0,0 0,2.2 V10.2" fill="none" stroke="#3d8ef5" stroke-width="1.3"/><path d="M6.2,15.4 H14.2" fill="none" stroke="#ced0d6" stroke-width="1.3"/><circle cx="16.0" cy="9.7" r="2.75" fill="#3a3d41" stroke="#3d8ef5" stroke-width="1.3"/><line x1="16.0" y1="12.45" x2="16.0" y2="18.5" stroke="#3d8ef5" stroke-width="1.3"/><rect x="16.0" y="15.8" width="3.5" height="1.7" fill="#3d8ef5"/><circle cx="1.2" cy="15" r="2.9" fill="#3a3d41" stroke="#ced0d6" stroke-width="1.3"/></svg>
<div class="nm" style="left:31.5px;top:84.6px">store_id</div>
<div class="ty" style="right:7.6px;top:84.6px">smallint</div>
<svg class="ci" style="left:5.8px;top:118.4px" width="24" height="24" viewBox="-2 -3 24 24"><rect x="0" y="0" width="5.2" height="15.4" fill="#3d4045"/><path d="M5.2,0 H15.600000000000001 Q17.8,0 17.8,2.2 V13.2 Q17.8,15.4 15.600000000000001,15.4 H4.6" fill="none" stroke="#ced0d6" stroke-width="1.3"/><path d="M5.2,0 H2.2 Q0,0 0,2.2 V10.600000000000001 M5.2,0 V15.4" fill="none" stroke="#ced0d6" stroke-width="1.3"/><circle cx="1.2" cy="15" r="2.9" fill="#3a3d41" stroke="#ced0d6" stroke-width="1.3"/></svg>
<div class="nm" style="left:31.5px;top:117.7px">last_update</div>
<div class="ty" style="right:7.6px;top:117.7px">timestamp</div>
<svg class="ci" style="left:5.8px;top:152.1px" width="24" height="24" viewBox="-2 -3 24 24"><path d="M5.2,0 H15.600000000000001 Q17.8,0 17.8,2.2 V5.3" fill="none" stroke="#ced0d6" stroke-width="1.3"/><rect x="0" y="0" width="5.2" height="13.8" fill="#213456"/><path d="M5.2,13.9 V0 H2.2 Q0,0 0,2.2 V10.2" fill="none" stroke="#3d8ef5" stroke-width="1.3"/><path d="M6.2,15.4 H14.2" fill="none" stroke="#ced0d6" stroke-width="1.3"/><circle cx="16.0" cy="9.7" r="2.75" fill="#3a3d41" stroke="#f2c356" stroke-width="1.3"/><line x1="16.0" y1="12.45" x2="16.0" y2="18.5" stroke="#f2c356" stroke-width="1.3"/><rect x="16.0" y="15.8" width="3.5" height="1.7" fill="#f2c356"/><circle cx="1.2" cy="15" r="2.9" fill="#3a3d41" stroke="#ced0d6" stroke-width="1.3"/></svg>
<div class="nm" style="left:31.5px;top:151.4px">inventory_id</div>
<div class="ty" style="right:7.6px;top:151.4px">integer</div>
</div>
<div class="tb" style="left:1228.7px;top:745.7px;width:256.1px;height:154.3px">
<div class="hd" style="height:41.9px"></div>
<div class="tt" style="top:7.6px;left:0;width:256.1px;font-size:25.5px;line-height:25.5px"><svg width="19.2" height="16.2" viewBox="0 0 19.2 16.2" style="vertical-align:0px;margin-right:10.5px;margin-left:-7px"><rect x="0.6" y="0.6" width="18" height="15" rx="2" fill="#43464b" stroke="#ced0d6" stroke-width="1.2"/><rect x="0.6" y="0.6" width="18" height="1.6" fill="#ced0d6"/><line x1="0.6" y1="5.1" x2="18.6" y2="5.1" stroke="#ced0d6" stroke-width="1.2"/><line x1="6.5" y1="0.6" x2="6.5" y2="15.6" stroke="#ced0d6" stroke-width="1.2"/><line x1="12.8" y1="0.6" x2="12.8" y2="15.6" stroke="#ced0d6" stroke-width="1.2"/></svg>film_actor</div>
<div class="sp" style="top:41.2px"></div>
<div class="sp" style="top:80.9px"></div>
<svg class="ci" style="left:5.8px;top:52.7px" width="24" height="24" viewBox="-2 -3 24 24"><rect x="0" y="0" width="5.2" height="15.4" fill="#3d4045"/><path d="M5.2,0 H15.600000000000001 Q17.8,0 17.8,2.2 V13.2 Q17.8,15.4 15.600000000000001,15.4 H4.6" fill="none" stroke="#ced0d6" stroke-width="1.3"/><path d="M5.2,0 H2.2 Q0,0 0,2.2 V10.600000000000001 M5.2,0 V15.4" fill="none" stroke="#ced0d6" stroke-width="1.3"/><circle cx="1.2" cy="15" r="2.9" fill="#3a3d41" stroke="#ced0d6" stroke-width="1.3"/></svg>
<div class="nm" style="left:31.5px;top:52px">last_update</div>
<div class="ty" style="right:7.6px;top:52px">timestamp</div>
<svg class="ci" style="left:5.8px;top:86.9px" width="24" height="24" viewBox="-2 -3 24 24"><path d="M5.2,0 H15.600000000000001 Q17.8,0 17.8,2.2 V5.3" fill="none" stroke="#ced0d6" stroke-width="1.3"/><rect x="0" y="0" width="5.2" height="10.2" fill="#213456"/><path d="M5.2,5.8 V0 H2.2 Q0,0 0,2.2 V10.3" fill="none" stroke="#3d8ef5" stroke-width="1.3"/><circle cx="8.2" cy="9.7" r="2.75" fill="#3a3d41" stroke="#3d8ef5" stroke-width="1.3"/><line x1="8.2" y1="12.45" x2="8.2" y2="18.5" stroke="#3d8ef5" stroke-width="1.3"/><rect x="8.2" y="15.8" width="3.5" height="1.7" fill="#3d8ef5"/><circle cx="16.1" cy="9.7" r="2.75" fill="#3a3d41" stroke="#f2c356" stroke-width="1.3"/><line x1="16.1" y1="12.45" x2="16.1" y2="18.5" stroke="#f2c356" stroke-width="1.3"/><rect x="16.1" y="15.8" width="3.5" height="1.7" fill="#f2c356"/><circle cx="1.2" cy="15" r="2.9" fill="#3a3d41" stroke="#ced0d6" stroke-width="1.3"/></svg>
<div class="nm" style="left:31.5px;top:86.2px">actor_id</div>
<div class="ty" style="right:7.6px;top:86.2px">smallint</div>
<svg class="ci" style="left:5.8px;top:119.3px" width="24" height="24" viewBox="-2 -3 24 24"><path d="M5.2,0 H15.600000000000001 Q17.8,0 17.8,2.2 V5.3" fill="none" stroke="#ced0d6" stroke-width="1.3"/><rect x="0" y="0" width="5.2" height="10.2" fill="#213456"/><path d="M5.2,5.8 V0 H2.2 Q0,0 0,2.2 V10.3" fill="none" stroke="#3d8ef5" stroke-width="1.3"/><circle cx="8.2" cy="9.7" r="2.75" fill="#3a3d41" stroke="#3d8ef5" stroke-width="1.3"/><line x1="8.2" y1="12.45" x2="8.2" y2="18.5" stroke="#3d8ef5" stroke-width="1.3"/><rect x="8.2" y="15.8" width="3.5" height="1.7" fill="#3d8ef5"/><circle cx="16.1" cy="9.7" r="2.75" fill="#3a3d41" stroke="#f2c356" stroke-width="1.3"/><line x1="16.1" y1="12.45" x2="16.1" y2="18.5" stroke="#f2c356" stroke-width="1.3"/><rect x="16.1" y="15.8" width="3.5" height="1.7" fill="#f2c356"/><circle cx="1.2" cy="15" r="2.9" fill="#3a3d41" stroke="#ced0d6" stroke-width="1.3"/></svg>
<div class="nm" style="left:31.5px;top:118.6px">film_id</div>
<div class="ty" style="right:7.6px;top:118.6px">smallint</div>
</div>
</div>
<div class="abs" style="left:241px;top:480px;width:803px;height:802px;border:3px solid #c6c6c6;background:#1f2023;overflow:hidden">
<svg class="abs" style="left:-244px;top:-483px" width="1100" height="1300">
<g fill="#353536"><rect x="296" y="483" width="2" height="795"/><rect x="356" y="483" width="2" height="795"/><rect x="416" y="483" width="2" height="795"/><rect x="476" y="483" width="2" height="795"/><rect x="536" y="483" width="2" height="795"/><rect x="596" y="483" width="2" height="795"/><rect x="656" y="483" width="2" height="795"/><rect x="716" y="483" width="2" height="795"/><rect x="776" y="483" width="2" height="795"/><rect x="836" y="483" width="2" height="795"/><rect x="896" y="483" width="2" height="795"/><rect x="956" y="483" width="2" height="795"/><rect x="1016" y="483" width="2" height="795"/><rect x="244" y="521" width="797" height="2"/><rect x="244" y="581" width="797" height="2"/><rect x="244" y="641" width="797" height="2"/><rect x="244" y="702" width="797" height="2"/><rect x="244" y="762" width="797" height="2"/><rect x="244" y="822" width="797" height="2"/><rect x="244" y="882" width="797" height="2"/><rect x="244" y="942" width="797" height="2"/><rect x="244" y="1002" width="797" height="2"/><rect x="244" y="1062" width="797" height="2"/><rect x="244" y="1122" width="797" height="2"/><rect x="244" y="1182" width="797" height="2"/><rect x="244" y="1242" width="797" height="2"/></g>
<rect x="384.4" y="880.6" width="568" height="345" fill="#1f2023"/>
<g fill="none" stroke="#c4c4c4" stroke-width="2.4"><path d="M228,500 V505 Q228,535 258,535 H496.5 Q526.6,535 526.6,565 V883"/><path d="M230,565 H880.5 Q896.7,565 896.7,549 V470"/><path d="M896.7,549 Q896.7,565 912.9,565 H1060"/><path d="M1060,535 H836 Q808.8,535 808.8,562 V883"/></g>
</svg>
<div class="abs" style="left:79.3px;top:150.58px;font-size:38.3px;line-height:38.3px;color:#cfd0d2;white-space:nowrap">category_id</div>
<div class="abs" style="left:17.5px;top:751.34px;font-size:25px;line-height:25px;color:#a9a9a9;white-space:nowrap;letter-spacing:0.2px">Powered by yFiles</div>
<div class="abs" style="left:142.4px;top:399.6px;width:256.4px;height:160px;transform:scale(2.2);transform-origin:0 0"><div class="tb" style="left:0px;top:0px;width:256.4px;height:155.45px">
<div class="hd" style="height:41px"></div>
<div class="tt" style="top:7.15px;left:0;width:256.4px;font-size:25.5px;line-height:25.5px"><svg width="19.2" height="16.2" viewBox="0 0 19.2 16.2" style="vertical-align:0px;margin-right:10.5px;margin-left:-7px"><rect x="0.6" y="0.6" width="18" height="15" rx="2" fill="#43464b" stroke="#ced0d6" stroke-width="1.2"/><rect x="0.6" y="0.6" width="18" height="1.6" fill="#ced0d6"/><line x1="0.6" y1="5.1" x2="18.6" y2="5.1" stroke="#ced0d6" stroke-width="1.2"/><line x1="6.5" y1="0.6" x2="6.5" y2="15.6" stroke="#ced0d6" stroke-width="1.2"/><line x1="12.8" y1="0.6" x2="12.8" y2="15.6" stroke="#ced0d6" stroke-width="1.2"/></svg>film_category</div>
<div class="sp" style="top:40.3px"></div>
<div class="sp" style="top:79.4px"></div>
<svg class="ci" style="left:5.8px;top:53.3px" width="24" height="24" viewBox="-2 -3 24 24"><rect x="0" y="0" width="5.2" height="15.4" fill="#3d4045"/><path d="M5.2,0 H15.600000000000001 Q17.8,0 17.8,2.2 V13.2 Q17.8,15.4 15.600000000000001,15.4 H4.6" fill="none" stroke="#ced0d6" stroke-width="1.3"/><path d="M5.2,0 H2.2 Q0,0 0,2.2 V10.600000000000001 M5.2,0 V15.4" fill="none" stroke="#ced0d6" stroke-width="1.3"/><circle cx="1.2" cy="15" r="2.9" fill="#3a3d41" stroke="#ced0d6" stroke-width="1.3"/></svg>
<div class="nm" style="left:31.5px;top:52.6px">last_update</div>
<div class="ty" style="right:7.6px;top:52.6px">timestamp</div>
<svg class="ci" style="left:5.8px;top:87.6px" width="24" height="24" viewBox="-2 -3 24 24"><path d="M5.2,0 H15.600000000000001 Q17.8,0 17.8,2.2 V5.3" fill="none" stroke="#ced0d6" stroke-width="1.3"/><rect x="0" y="0" width="5.2" height="10.2" fill="#213456"/><path d="M5.2,5.8 V0 H2.2 Q0,0 0,2.2 V10.3" fill="none" stroke="#3d8ef5" stroke-width="1.3"/><circle cx="8.2" cy="9.7" r="2.75" fill="#3a3d41" stroke="#3d8ef5" stroke-width="1.3"/><line x1="8.2" y1="12.45" x2="8.2" y2="18.5" stroke="#3d8ef5" stroke-width="1.3"/><rect x="8.2" y="15.8" width="3.5" height="1.7" fill="#3d8ef5"/><circle cx="16.1" cy="9.7" r="2.75" fill="#3a3d41" stroke="#f2c356" stroke-width="1.3"/><line x1="16.1" y1="12.45" x2="16.1" y2="18.5" stroke="#f2c356" stroke-width="1.3"/><rect x="16.1" y="15.8" width="3.5" height="1.7" fill="#f2c356"/><circle cx="1.2" cy="15" r="2.9" fill="#3a3d41" stroke="#ced0d6" stroke-width="1.3"/></svg>
<div class="nm" style="left:31.5px;top:86.9px">film_id</div>
<div class="ty" style="right:7.6px;top:86.9px">smallint</div>
<svg class="ci" style="left:5.8px;top:119.95px" width="24" height="24" viewBox="-2 -3 24 24"><path d="M5.2,0 H15.600000000000001 Q17.8,0 17.8,2.2 V5.3" fill="none" stroke="#ced0d6" stroke-width="1.3"/><rect x="0" y="0" width="5.2" height="10.2" fill="#213456"/><path d="M5.2,5.8 V0 H2.2 Q0,0 0,2.2 V10.3" fill="none" stroke="#3d8ef5" stroke-width="1.3"/><circle cx="8.2" cy="9.7" r="2.75" fill="#3a3d41" stroke="#3d8ef5" stroke-width="1.3"/><line x1="8.2" y1="12.45" x2="8.2" y2="18.5" stroke="#3d8ef5" stroke-width="1.3"/><rect x="8.2" y="15.8" width="3.5" height="1.7" fill="#3d8ef5"/><circle cx="16.1" cy="9.7" r="2.75" fill="#3a3d41" stroke="#f2c356" stroke-width="1.3"/><line x1="16.1" y1="12.45" x2="16.1" y2="18.5" stroke="#f2c356" stroke-width="1.3"/><rect x="16.1" y="15.8" width="3.5" height="1.7" fill="#f2c356"/><circle cx="1.2" cy="15" r="2.9" fill="#3a3d41" stroke="#ced0d6" stroke-width="1.3"/></svg>
<div class="nm" style="left:31.5px;top:119.25px">category_id</div>
<div class="ty" style="right:7.6px;top:119.25px">smallint</div>
</div></div>
</div>
<div class="abs" style="left:1510px;top:136px;width:28px;height:1156px;background:#2b2d30"></div>
<div class="abs" style="left:1516px;top:468px;width:16px;height:223px;border-radius:8px;background:#4a4c50"></div>
<div class="abs" style="left:0;top:1292px;width:1538px;height:28px;background:#2b2d30"></div>
<div class="abs" style="left:396px;top:1298px;width:294px;height:16px;border-radius:8px;background:#4a4c50"></div>
</body></html>
